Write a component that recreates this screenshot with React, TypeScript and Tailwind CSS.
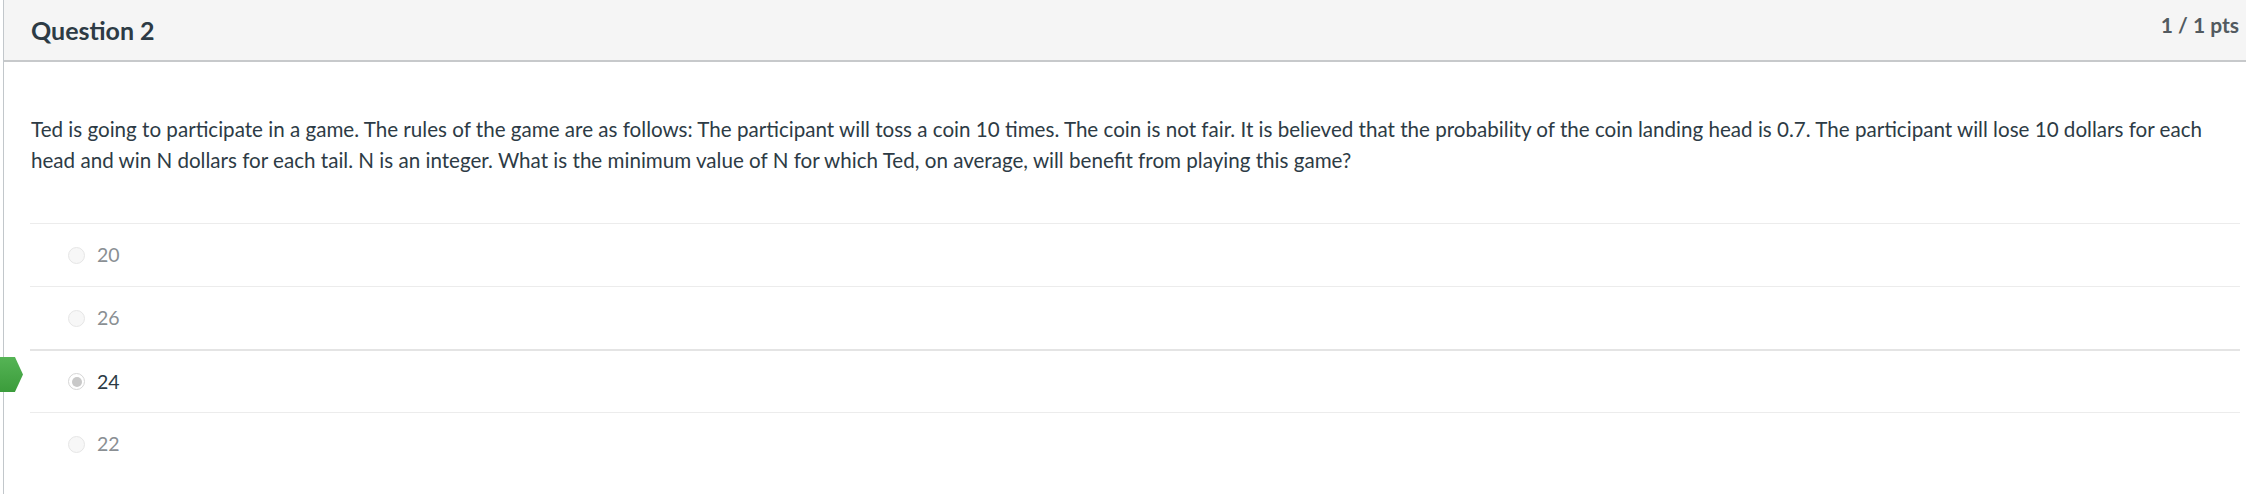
import React from "react";

const options = [
  { label: "20", selected: false },
  { label: "26", selected: false },
  { label: "24", selected: true },
  { label: "22", selected: false },
];

export default function App() {
  return (
    <div className="relative w-[2246px] h-[494px] bg-white pl-[3px] font-['Lato','Noto_Sans',sans-serif] overflow-hidden">
      <div className="h-full border-l border-[#c2c7cb] flex flex-col">
        <div className="h-[62px] bg-[#f5f5f5] border-b-2 border-[#c7c9cb] flex items-start justify-between pl-[27px] pr-[7px]">
          <div className="pt-[15px] text-[25px] leading-[30px] font-bold text-[#2d3b45]">Question 2</div>
          <div className="pt-[12px] text-[21px] leading-[25px] font-bold text-[#525a60]">1 / 1 pts</div>
        </div>
        <div className="mt-[52px] pl-[27px] pr-[20px] text-[20.6px] leading-[30.5px] text-[#2d3b45]">
          Ted is going to participate in a game. The rules of the game are as follows: The participant will toss a coin 10 times. The coin is not fair. It is believed that the probability of the coin landing head is 0.7. The participant will lose 10 dollars for each head and win N dollars for each tail. N is an integer. What is the minimum value of N for which Ted, on average, will benefit from playing this game?
        </div>
        <div className="mt-[48px] ml-[26px] mr-[6px] flex flex-col">
          {options.map((o) => (
            <div
              key={o.label}
              className={
                o.selected
                  ? "h-[63px] border-t-2 border-[#e4e4e4] flex items-center pl-[38px]"
                  : "h-[63px] border-t border-[#ececec] flex items-center pl-[38px]"
              }
            >
              {o.selected ? (
                <span className="w-[17px] h-[17px] rounded-full border border-[#d6d6d6] bg-white flex items-center justify-center">
                  <span className="w-[10px] h-[10px] rounded-full bg-[#c9c9c9]" />
                </span>
              ) : (
                <span className="w-[17px] h-[17px] rounded-full border border-[#e6e6e6] bg-[#f7f7f7]" />
              )}
              <span
                className={
                  o.selected
                    ? "ml-[12px] text-[19.5px] text-[#2d3b45]"
                    : "ml-[12px] text-[19.5px] text-[#8a8f93]"
                }
              >
                {o.label}
              </span>
            </div>
          ))}
        </div>
      </div>
      <div className="absolute left-0 top-[357px] w-[23px] h-[35px] bg-gradient-to-b from-[#55b455] to-[#3b9c3b] [clip-path:polygon(0_0,65%_0,100%_50%,65%_100%,0_100%)]" />
    </div>
  );
}
